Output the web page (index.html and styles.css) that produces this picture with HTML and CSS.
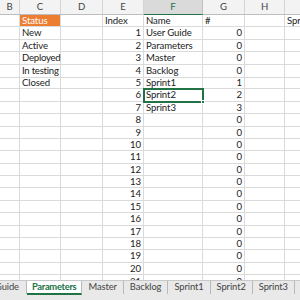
FILE: index.html
```html
<!DOCTYPE html>
<html>
<head>
<meta charset="utf-8">
<link rel="stylesheet" href="styles.css">
</head>
<body>
<div class="app">
  <div class="sheet">
    <div class="row head">
      <span>B</span><span>C</span><span>D</span><span>E</span><span class="hsel">F</span><span>G</span><span>H</span><span></span>
    </div>
    <div class="row"><span></span><span class="status">Status</span><span></span><span>Index</span><span>Name</span><span>#</span><span></span><span>Spr</span></div>
    <div class="row"><span></span><span>New</span><span></span><span class="n">1</span><span>User Guide</span><span class="n">0</span><span></span><span></span></div>
    <div class="row"><span></span><span>Active</span><span></span><span class="n">2</span><span>Parameters</span><span class="n">0</span><span></span><span></span></div>
    <div class="row"><span></span><span class="spill">Deployed</span><span></span><span class="n">3</span><span>Master</span><span class="n">0</span><span></span><span></span></div>
    <div class="row"><span></span><span class="spill">In testing</span><span></span><span class="n">4</span><span>Backlog</span><span class="n">0</span><span></span><span></span></div>
    <div class="row"><span></span><span>Closed</span><span></span><span class="n">5</span><span>Sprint1</span><span class="n">1</span><span></span><span></span></div>
    <div class="row"><span></span><span></span><span></span><span class="n">6</span><span class="sel">Sprint2</span><span class="n">2</span><span></span><span></span></div>
    <div class="row"><span></span><span></span><span></span><span class="n">7</span><span>Sprint3</span><span class="n">3</span><span></span><span></span></div>
    <div class="row"><span></span><span></span><span></span><span class="n">8</span><span></span><span class="n">0</span><span></span><span></span></div>
    <div class="row"><span></span><span></span><span></span><span class="n">9</span><span></span><span class="n">0</span><span></span><span></span></div>
    <div class="row"><span></span><span></span><span></span><span class="n">10</span><span></span><span class="n">0</span><span></span><span></span></div>
    <div class="row"><span></span><span></span><span></span><span class="n">11</span><span></span><span class="n">0</span><span></span><span></span></div>
    <div class="row"><span></span><span></span><span></span><span class="n">12</span><span></span><span class="n">0</span><span></span><span></span></div>
    <div class="row"><span></span><span></span><span></span><span class="n">13</span><span></span><span class="n">0</span><span></span><span></span></div>
    <div class="row"><span></span><span></span><span></span><span class="n">14</span><span></span><span class="n">0</span><span></span><span></span></div>
    <div class="row"><span></span><span></span><span></span><span class="n">15</span><span></span><span class="n">0</span><span></span><span></span></div>
    <div class="row"><span></span><span></span><span></span><span class="n">16</span><span></span><span class="n">0</span><span></span><span></span></div>
    <div class="row"><span></span><span></span><span></span><span class="n">17</span><span></span><span class="n">0</span><span></span><span></span></div>
    <div class="row"><span></span><span></span><span></span><span class="n">18</span><span></span><span class="n">0</span><span></span><span></span></div>
    <div class="row"><span></span><span></span><span></span><span class="n">19</span><span></span><span class="n">0</span><span></span><span></span></div>
    <div class="row"><span></span><span></span><span></span><span class="n">20</span><span></span><span class="n">0</span><span></span><span></span></div>
    <div class="row last"><span></span><span></span><span></span><span class="n">21</span><span></span><span class="n">0</span><span></span><span></span></div>
  </div>
  <div class="tabs">
    <span class="tab first">Guide</span>
    <span class="tab active">Parameters</span>
    <span class="tab">Master</span>
    <span class="tab">Backlog</span>
    <span class="tab">Sprint1</span>
    <span class="tab">Sprint2</span>
    <span class="tab">Sprint3</span>
  </div>
</div>
</body>
</html>
```

FILE: styles.css
```css
html, body {
  margin: 0;
  padding: 0;
  background: #ffffff;
}
.app {
  width: 300px;
  height: 300px;
  overflow: hidden;
  display: flex;
  flex-direction: column;
  font-family: Lato, "Liberation Sans", sans-serif;
  font-size: 9.6px;
  letter-spacing: -0.1px;
  color: #222;
}
.sheet {
  height: 280px;
  overflow: hidden;
  flex: none;
}
.row {
  display: grid;
  grid-template-columns: 20px 41px 42px 41px 59px 42px 40px 30px;
  height: 12.4px;
}
.row > span {
  box-sizing: border-box;
  border-right: 1px solid #dadada;
  border-bottom: 1px solid #dadada;
  padding: 0 2px;
  line-height: 12px;
  white-space: nowrap;
  overflow: hidden;
}
.row > span.spill {
  overflow: visible;
  letter-spacing: -0.25px;
}
.row > span.n {
  text-align: right;
}
.row.last > span {
  line-height: 13px;
}
.row.head {
  height: 15px;
  background: #f3f3f3;
}
.row.head > span {
  text-align: center;
  line-height: 14px;
  color: #444;
  border-right: 1px solid #d4d4d4;
  border-bottom: 1px solid #bdbdbd;
}
.row.head > span.hsel {
  background: #dadada;
  color: #217346;
  border-bottom: 1px solid #217346;
  border-right-color: #c0c0c0;
}
.status {
  background: #ed7d31;
  color: #ffffff;
}
.sel {
  position: relative;
  overflow: visible !important;
  outline: 2px solid #217346;
  outline-offset: -1px;
}
.sel::after {
  content: "";
  position: absolute;
  right: -3px;
  bottom: -3px;
  width: 4px;
  height: 4px;
  background: #217346;
  border: 1px solid #fff;
  box-sizing: border-box;
}
.tabs {
  flex: none;
  height: 20px;
  display: flex;
  align-items: flex-start;
  background: #e9e9e9;
  border-top: 1px solid #c8c8c8;
  box-sizing: border-box;
  font-size: 9.4px;
}
.tab {
  height: 13px;
  line-height: 12px;
  padding: 0 6px;
  border-right: 1px solid #b9b9b9;
  color: #444;
  box-sizing: border-box;
  white-space: nowrap;
}
.tab.first {
  margin-left: -5px;
  padding: 0 7px 0 0;
}
.tab.active {
  background: #ffffff;
  color: #217346;
  font-weight: bold;
  letter-spacing: -0.3px;
  padding: 0 5px;
  border-bottom: 2px solid #217346;
  height: 14px;
}
```
